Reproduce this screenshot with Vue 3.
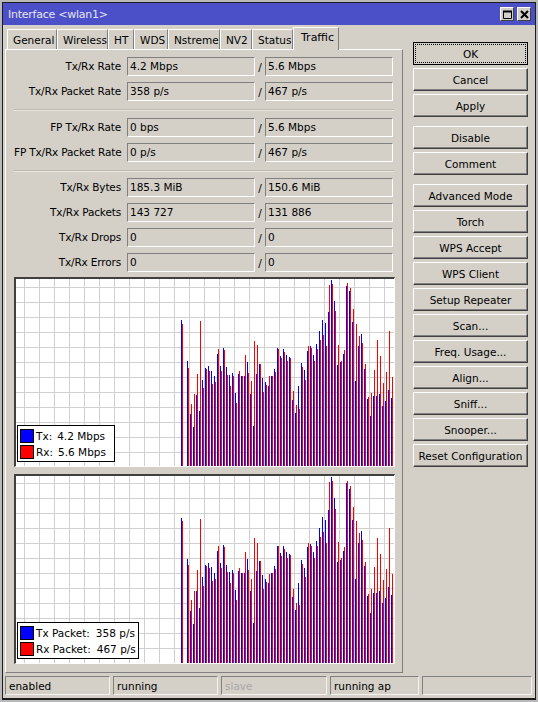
<script setup>
const rows = [
  [['Tx/Rx Rate', '4.2 Mbps', '5.6 Mbps'], ['Tx/Rx Packet Rate', '358 p/s', '467 p/s']],
  [['FP Tx/Rx Rate', '0 bps', '5.6 Mbps'], ['FP Tx/Rx Packet Rate', '0 p/s', '467 p/s']],
  [['Tx/Rx Bytes', '185.3 MiB', '150.6 MiB'], ['Tx/Rx Packets', '143 727', '131 886'], ['Tx/Rx Drops', '0', '0'], ['Tx/Rx Errors', '0', '0']]
]
const tabs = [
  ['General', 50], ['Wireless', 51], ['HT', 26], ['WDS', 34], ['Nstreme', 52], ['NV2', 32], ['Status', 41]
]
const buttonGroups = [
  ['OK', 'Cancel', 'Apply'],
  ['Disable', 'Comment'],
  ['Advanced Mode', 'Torch', 'WPS Accept', 'WPS Client', 'Setup Repeater', 'Scan...', 'Freq. Usage...', 'Align...', 'Sniff...', 'Snooper...', 'Reset Configuration']
]
const top1 = [[135,147],null,[258,279],[417,387],[456,357],[360,297],[408,138],[315,339],[279,282],[273,288],[288,327],[303,321],[237,222],[273,288],[219,225],[276,300],[300,333],[294,303],[354,384],[297,288],[303,303],[303,240],[261,294],[357,318],[453,198],[297,210],[267,267],[309,351],[321,330],[333,303],[303,303],[282,291],[219,222],[243,249],[222,231],[240,258],[246,249],[375,348],[414,390],[333,402],[264,276],[285,315],[228,213],[213,219],[240,258],[207,222],[168,195],[135,180],[144,213],[111,30],[15,27],[78,108],[270,210],[261,258],[237,225],[33,24],[48,39],[141,102],[318,147],[213,183],[177,204],[282,267],[372,366],[423,354],[363,285],[363,195],[357,243],[393,324],[378,291],[345,168],[369,306]]
const top2 = [[144,153],null,[267,285],[423,390],[462,363],[363,300],[414,147],[321,348],[285,288],[279,294],[291,333],[309,327],[243,228],[279,294],[225,231],[285,306],[306,339],[300,309],[360,390],[303,294],[309,309],[309,246],[267,300],[363,327],[459,204],[303,219],[273,273],[315,357],[327,336],[339,312],[309,309],[288,297],[228,228],[249,258],[228,237],[246,264],[252,255],[381,357],[420,399],[339,405],[270,282],[294,321],[231,219],[222,228],[246,264],[213,228],[174,201],[141,186],[150,219],[120,36],[21,33],[84,117],[276,216],[270,264],[243,231],[39,33],[57,48],[150,111],[327,153],[219,189],[183,210],[288,276],[378,372],[429,357],[369,291],[369,204],[363,252],[399,330],[384,297],[351,174],[375,312]]

function chart(tops, zoomY, plotTop, plotH, firstH, legend, legendClass) {
  const bars = []
  tops.forEach((pair, i) => {
    if (!pair) return
    const x = 181 - 16 + i * 3
    const by = Math.round(zoomY + pair[0] / 3) - plotTop
    const ry = Math.round(zoomY + pair[1] / 3) - plotTop
    bars.push({ key: i, x, by, bh: plotH - by, ry, rh: plotH - ry })
  })
  const vs = []
  for (let x = 8; x < 378; x += 15) vs.push(x)
  const hs = []
  for (let y = firstH; y < plotH; y += 15) hs.push(y)
  return { bars, vs, hs, plotH, legend, legendClass }
}
const charts = [
  chart(top1, 275, 279, 187, 8, [['Tx:', '4.2 Mbps', '#0000ff'], ['Rx:', '5.6 Mbps', '#ff0000']], 'legend-a'),
  chart(top2, 470, 476, 187, 7, [['Tx Packet:', '358 p/s', '#0000ff'], ['Rx Packet:', '467 p/s', '#ff0000']], 'legend-b')
]
</script>

<template>
  <div class="desk">
    <div class="window">
      <header class="title">
        <span class="title-text">Interface &lt;wlan1&gt;</span>
        <div class="title-btns">
          <span class="tbtn"><svg width="9" height="9" viewBox="0 0 9 9"><path d="M.5 1.5h8v7h-8z" fill="none" stroke="#000"/><path d="M0 1.5h9" stroke="#000" stroke-width="2"/></svg></span>
          <span class="tbtn"><svg width="9" height="9" viewBox="0 0 9 9"><path d="M1 1l7 7M8 1l-7 7" fill="none" stroke="#000" stroke-width="2"/></svg></span>
        </div>
      </header>
      <div class="main">
        <div class="left">
          <nav class="tabs">
            <span v-for="t in tabs" :key="t[0]" class="tab" :style="{ width: t[1] + 'px' }">{{ t[0] }}</span>
            <span class="tab active">Traffic</span>
          </nav>
          <section class="panel">
            <div v-for="(group, gi) in rows" :key="gi" class="group">
              <div v-for="r in group" :key="r[0]" class="row">
                <span class="label">{{ r[0] }}</span>
                <span class="field">{{ r[1] }}</span>
                <span class="slash">/</span>
                <span class="field">{{ r[2] }}</span>
              </div>
            </div>
            <div v-for="(c, ci) in charts" :key="ci" class="chart">
              <svg class="plot" width="378" :height="c.plotH" :viewBox="`0 0 378 ${c.plotH}`" shape-rendering="crispEdges">
                <line v-for="x in c.vs" :key="'v' + x" :x1="x + 0.5" :x2="x + 0.5" y1="0" :y2="c.plotH" class="grid" />
                <line v-for="y in c.hs" :key="'h' + y" x1="0" x2="378" :y1="y + 0.5" :y2="y + 0.5" class="grid" />
                <g v-for="b in c.bars" :key="b.key">
                  <rect :x="b.x" :y="b.by" width="1" :height="b.bh" fill="#0000ff" />
                  <rect :x="b.x + 1" :y="b.ry" width="1" :height="b.rh" fill="#ff0000" />
                </g>
              </svg>
              <div class="legend" :class="c.legendClass">
                <div v-for="l in c.legend" :key="l[0]" class="leg-row">
                  <i class="swatch" :style="{ background: l[2] }"></i>
                  <span class="leg-name">{{ l[0] }}</span>
                  <span class="leg-val">{{ l[1] }}</span>
                </div>
              </div>
            </div>
          </section>
        </div>
        <aside class="buttons">
          <div v-for="(g, gi) in buttonGroups" :key="gi" class="btn-group">
            <button v-for="b in g" :key="b" class="btn" :class="{ focus: b === 'OK' }" type="button"><span>{{ b }}</span></button>
          </div>
        </aside>
      </div>
      <footer class="status">
        <span class="cell w105">enabled</span>
        <span class="cell w105">running</span>
        <span class="cell w106 dim">slave</span>
        <span class="cell w89">running ap</span>
        <span class="cell grow"></span>
      </footer>
    </div>
  </div>
</template>

<style>
html, body { margin: 0; padding: 0; background: #9a9a9a; }
</style>

<style scoped>
.desk {
  width: 538px;
  height: 702px;
  box-sizing: border-box;
  padding: 2px 2px 2px 2px;
  overflow: hidden;
  background: #b9b9b9;
  font-family: "DejaVu Sans", sans-serif;
  font-size: 10.5px;
  color: #000;
}
.window {
  height: 100%;
  box-sizing: border-box;
  border: 1px solid #1c1c1c;
  border-bottom-width: 2px;
  background: #d4d0c8;
  display: flex;
  flex-direction: column;
}
.title {
  height: 22px;
  flex: none;
  background: #4c50c8;
  color: #e6e6f2;
  font-size: 11px;
  letter-spacing: -0.25px;
  display: flex;
  align-items: center;
  justify-content: space-between;
  padding: 0 4px 0 5px;
}
.title-btns { display: flex; gap: 3px; }
.tbtn {
  width: 14px;
  height: 14px;
  background: #d4d0c8;
  box-sizing: border-box;
  border: 1px solid;
  border-color: #fff #404040 #404040 #fff;
  display: flex;
  align-items: center;
  justify-content: center;
}
.main {
  flex: 1;
  display: flex;
  min-height: 0;
}
.left {
  width: 398px;
  margin-left: 2px;
  display: flex;
  flex-direction: column;
}
.tabs {
  height: 24px;
  flex: none;
  display: flex;
  align-items: flex-end;
  padding-left: 2px;
  position: relative;
  z-index: 1;
}
.tab {
  height: 20px;
  box-sizing: border-box;
  border-top: 1px solid #fff;
  border-left: 1px solid #fff;
  border-right: 1px solid #808080;
  padding-left: 5px;
  line-height: 20px;
  white-space: nowrap;
}
.tab.active {
  height: 23px;
  width: 46px;
  padding-left: 7px;
  font-size: 11px;
  line-height: 20px;
  margin-bottom: -1px;
  padding-bottom: 2px;
  background: #d4d0c8;
}
.panel {
  width: 398px;
  height: 624px;
  box-sizing: border-box;
  border: 1px solid;
  border-color: #fff #808080 #808080 #fff;
  padding: 7px 0 0 8px;
}
.group {
  display: flex;
  flex-direction: column;
  gap: 6px;
  padding-bottom: 8px;
  margin: 0 8px 8px 0;
  border-bottom: 1px solid #bdb9b1;
  box-shadow: 0 1px 0 #e8e6e0;
}
.group:nth-child(2) { margin-bottom: 7px; }
.group:nth-child(3) {
  border-bottom: none;
  box-shadow: none;
  padding-bottom: 0;
  margin-bottom: 5px;
}
.row {
  display: flex;
  align-items: center;
  height: 19px;
}
.label {
  width: 107px;
  margin-right: 6px;
  flex: none;
  text-align: right;
  white-space: nowrap;
  letter-spacing: -0.15px;
  line-height: 16px;
  height: 18px;
}
.field {
  width: 128px;
  height: 19px;
  box-sizing: border-box;
  flex: none;
  border: 1px solid;
  border-color: #808080 #fff #fff #808080;
  padding-left: 2px;
  line-height: 16px;
}
.slash {
  width: 10px;
  text-align: center;
  flex: none;
}
.chart {
  position: relative;
  width: 381px;
  height: 190px;
  box-sizing: border-box;
  margin-bottom: 7px;
  border-top: 2px solid #404040;
  border-left: 2px solid #404040;
  border-right: 1px solid #fff;
  border-bottom: 1px solid #fff;
  background: #fff;
}
.plot { display: block; }
.grid { stroke: #d0d0d0; stroke-width: 1; }
.legend {
  position: absolute;
  left: 1px;
  bottom: 4px;
  box-sizing: border-box;
  height: 37px;
  background: #fff;
  border: 1px solid #000;
  padding: 3px 0 0 2px;
  display: flex;
  flex-direction: column;
  gap: 2px;
}
.legend-a { width: 98px; }
.legend-b { width: 122px; }
.leg-row {
  display: flex;
  align-items: center;
  height: 14px;
  white-space: nowrap;
}
.swatch {
  width: 14px;
  height: 14px;
  box-sizing: border-box;
  border: 1px solid #000;
  margin-right: 2px;
  flex: none;
}
.leg-val { margin-left: 5px; }
.legend-b .leg-val { margin-left: 6px; }
.buttons {
  margin: 17px 0 0 10px;
  width: 115px;
  flex: none;
  display: flex;
  flex-direction: column;
  gap: 9px;
}
.btn-group {
  display: flex;
  flex-direction: column;
  gap: 3px;
}
.btn {
  width: 115px;
  height: 23px;
  box-sizing: border-box;
  margin: 0;
  padding: 1px 0 0;
  font: inherit;
  color: #000;
  background: #d4d0c8;
  border: 1px solid;
  border-color: #fff #404040 #404040 #fff;
  box-shadow: inset -1px -1px 0 #808080;
  white-space: nowrap;
}
.btn.focus {
  border: 1px solid #000;
  box-shadow: none;
  outline: 1px dotted #000;
  outline-offset: -3px;
}
.status {
  height: 19px;
  flex: none;
  display: flex;
  gap: 3px;
  margin: 3px 3px 3px 2px;
}
.cell {
  box-sizing: border-box;
  border: 1px solid;
  border-color: #808080 #f4f2ee #f4f2ee #808080;
  padding-left: 3px;
  line-height: 19px;
  flex: none;
}
.w105 { width: 105px; }
.w106 { width: 106px; }
.w89 { width: 89px; }
.cell.grow { flex: 1; }
.dim { color: #a8a8a8; }
</style>
